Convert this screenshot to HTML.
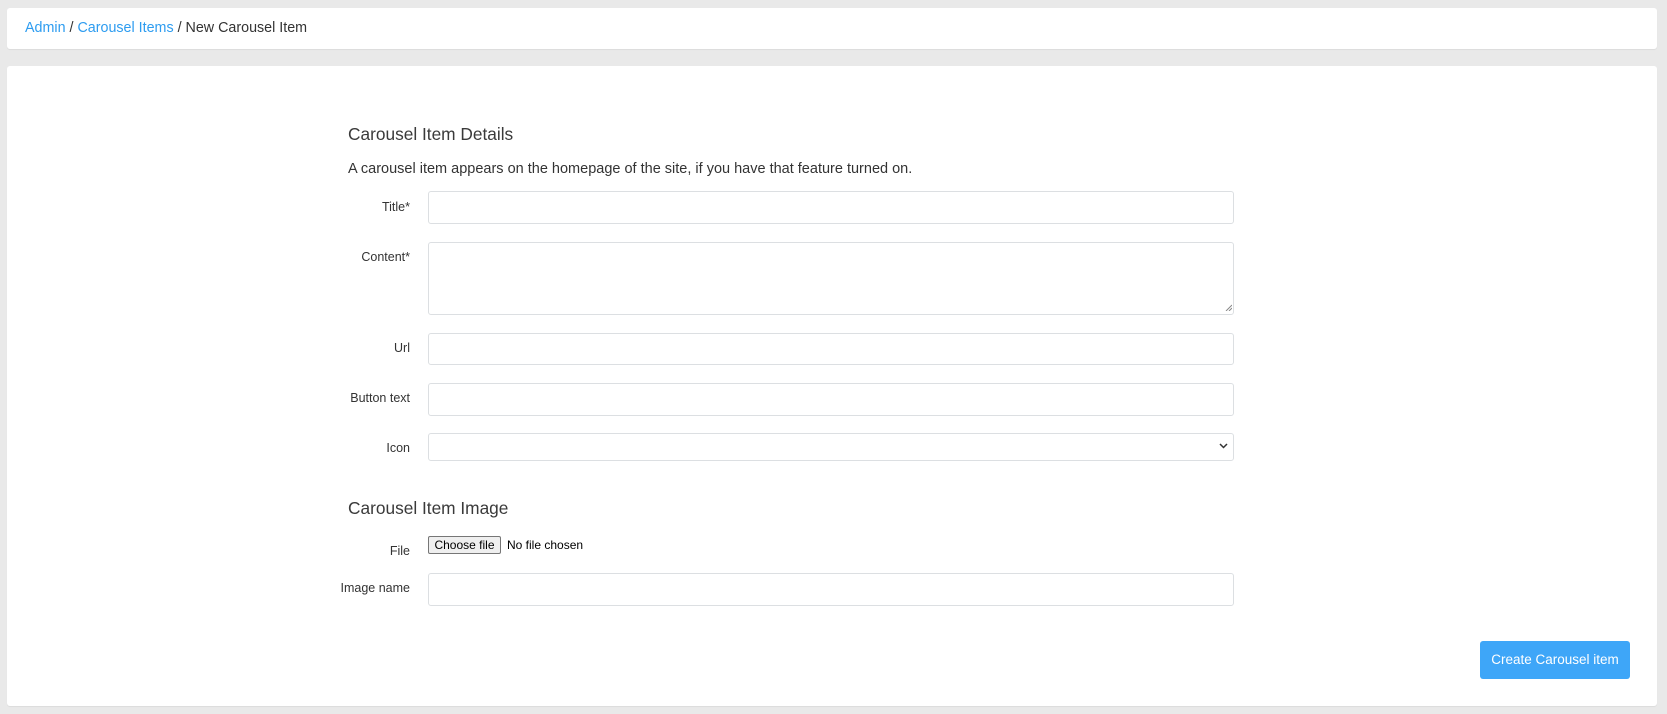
<!DOCTYPE html>
<html><head><style>
body{margin:0;width:1667px;height:714px;background:#e9e9e9;font-family:"Liberation Sans",sans-serif;color:#333;position:relative;overflow:hidden}
.card{position:absolute;background:#fff;border-radius:3px;box-shadow:0 1px 1px rgba(0,0,0,.06)}
.a{position:absolute}
a{color:#2d9cf0;text-decoration:none}
.inp{position:absolute;left:428px;width:804px;border:1px solid #dcdfe2;border-radius:3px;background:#fff}
.lab{position:absolute;right:1257px;font-size:12.5px;color:#333;text-align:right;white-space:nowrap}
h3{position:absolute;margin:0;font-weight:normal;font-size:17.3px;color:#3a3a3a;left:348px}
</style></head><body>
<div class="card" style="left:7px;top:8px;width:1650px;height:41px"></div>
<div class="a" style="left:25px;top:20px;font-size:14.3px"><a>Admin</a> / <a>Carousel Items</a> / New Carousel Item</div>
<div class="card" style="left:7px;top:66px;width:1650px;height:640px"></div>
<h3 style="top:124px">Carousel Item Details</h3>
<div class="a" style="left:348px;top:161px;font-size:14.5px">A carousel item appears on the homepage of the site, if you have that feature turned on.</div>
<div class="lab" style="top:200px">Title*</div><div class="inp" style="top:191px;height:31px"></div>
<div class="lab" style="top:250px">Content*</div><div class="inp" style="top:242px;height:71px"></div>
<svg class="a" style="left:1225px;top:304px" width="7" height="7"><path d="M1 7L7 1M4 7L7 4" stroke="#888" stroke-width="1"/></svg>
<div class="lab" style="top:341px">Url</div><div class="inp" style="top:333px;height:30px"></div>
<div class="lab" style="top:391px">Button text</div><div class="inp" style="top:383px;height:31px"></div>
<div class="lab" style="top:441px">Icon</div><div class="inp" style="top:433px;height:26px"></div>
<svg class="a" style="left:1219px;top:443px" width="9" height="6"><path d="M1 1L4.5 4.5L8 1" stroke="#333" stroke-width="1.5" fill="none"/></svg>
<h3 style="top:498px">Carousel Item Image</h3>
<div class="lab" style="top:544px">File</div>
<div class="a" style="left:428px;top:536px;width:71px;height:16px;border:1px solid #767676;border-radius:2px;background:#efefef;font-size:12px;text-align:center;line-height:16px;color:#000">Choose file</div>
<div class="a" style="left:507px;top:538px;font-size:12px;color:#000">No file chosen</div>
<div class="lab" style="top:581px">Image name</div><div class="inp" style="top:573px;height:31px"></div>
<div class="a" style="left:1480px;top:641px;width:150px;height:38px;background:#3ea6f8;border-radius:3px;color:#fff;font-size:13.5px;line-height:38px;text-align:center">Create Carousel item</div>
</body></html>
